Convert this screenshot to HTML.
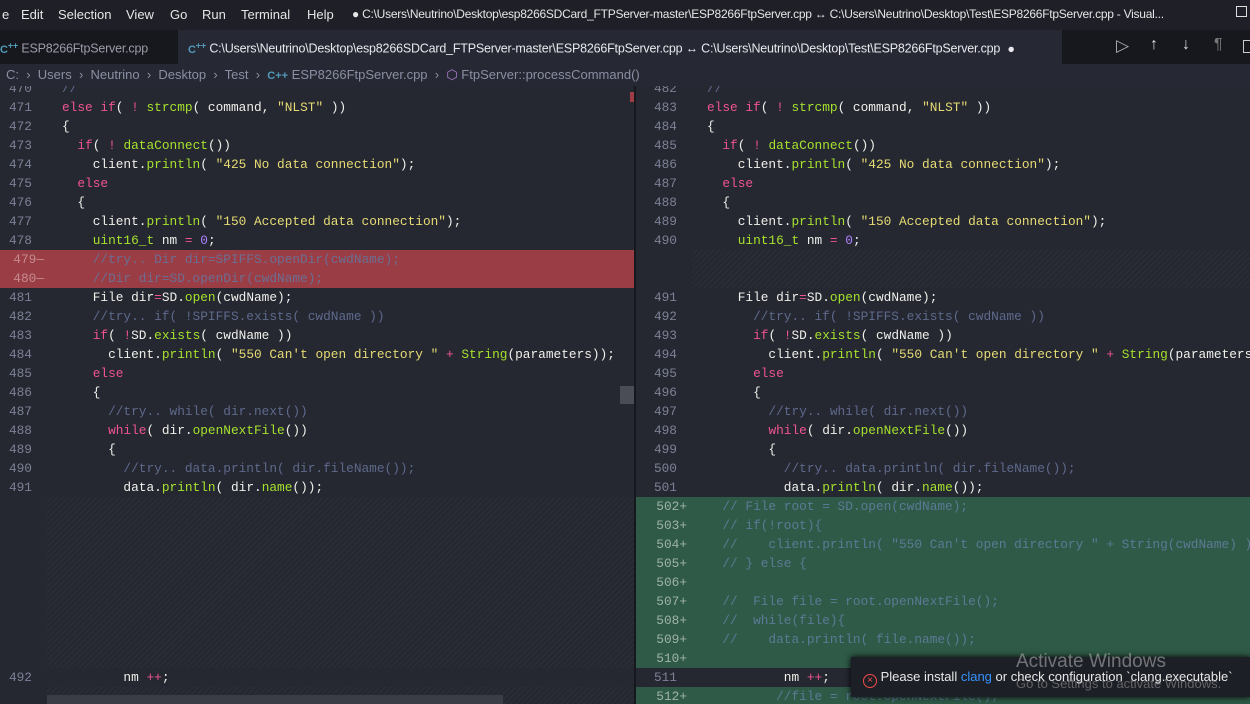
<!DOCTYPE html>
<html><head><meta charset="utf-8"><style>
*{margin:0;padding:0;box-sizing:border-box}
body{width:1250px;height:704px;overflow:hidden;background:#252731;font-family:"Liberation Sans",sans-serif;position:relative}
.top{position:absolute;left:0;top:0;width:1250px;height:30px;background:#1e1f27;color:#e6e6e6;font-size:13px}
.top span{position:absolute;top:7px;white-space:nowrap}
.tabs{position:absolute;top:30px;left:0;width:1250px;height:34px;background:#17181e}
.tab{position:absolute;top:0;height:34px;font-size:12.5px;color:#9a9ca8;padding-top:10px;white-space:nowrap;overflow:hidden;letter-spacing:-0.2px}
.bc{position:absolute;top:64px;left:0;width:1250px;height:22px;background:#262833;color:#8b8fa3;font-size:13px;padding:3px 0 0 6px;white-space:pre}
.ed{position:absolute;top:86px;height:618px;background:#252731;overflow:hidden}
.row{position:absolute;left:0;height:19px;width:100%;font-family:"Liberation Mono",monospace;font-size:12.8px;line-height:19px;white-space:pre;color:#f0f0ea}
.ln{position:absolute;top:0;text-align:right;color:#7d8196}
.code{position:absolute;top:0}
.k{color:#f0548f}.f{color:#a6e22e}.s{color:#e6db74}.c{color:#5e6a8c}.n{color:#ae81ff}
.del{background:#9b3d45}.del .c{color:#6b6f93}.del .ln{color:#c58a90}
.add{background:#2f5a47}.add .c{color:#5c7a96}.add .ln{color:#9fb3a8}
.hatch{background:repeating-linear-gradient(135deg,#252731 0 3px,#2c2e38 3px 4px)}
</style></head><body>
<div class="top">
<span style="left:2px">e</span><span style="left:21px">Edit</span><span style="left:58px">Selection</span><span style="left:126px">View</span><span style="left:170px">Go</span><span style="left:202px">Run</span><span style="left:241px">Terminal</span><span style="left:307px">Help</span>
<span style="left:352px;font-size:12px;letter-spacing:-0.25px">● C:\Users\Neutrino\Desktop\esp8266SDCard_FTPServer-master\ESP8266FtpServer.cpp ↔ C:\Users\Neutrino\Desktop\Test\ESP8266FtpServer.cpp - Visual...</span>
<span style="left:1236px;top:6px;width:11px;height:11px;border:1px solid #ddd"></span>
</div>
<div class="tabs">
<div class="tab" style="left:0;width:178px;"><span style="color:#519aba;font-size:11px;font-weight:bold">C<sup>++</sup></span> ESP8266FtpServer.cpp</div>
<div class="tab" style="left:178px;width:884px;background:#262833;color:#e8e8ee;padding-left:10px"><span style="color:#519aba;font-size:11px;font-weight:bold">C<sup>++</sup></span> C:\Users\Neutrino\Desktop\esp8266SDCard_FTPServer-master\ESP8266FtpServer.cpp ↔ C:\Users\Neutrino\Desktop\Test\ESP8266FtpServer.cpp <span style="margin-left:4px">●</span></div>
<div style="position:absolute;left:1116px;top:6px;color:#aaa;font-size:17px">▷</div>
<div style="position:absolute;left:1150px;top:6px;color:#ddd;font-size:16px">↑</div>
<div style="position:absolute;left:1182px;top:6px;color:#ddd;font-size:16px">↓</div>
<div style="position:absolute;left:1214px;top:6px;color:#777;font-size:16px">¶</div>
<div style="position:absolute;left:1243px;top:10px;width:8px;height:13px;border:1px solid #ccc"></div>
</div>
<div class="bc">C:  ›  Users  ›  Neutrino  ›  Desktop  ›  Test  ›  <span style="color:#519aba;font-weight:bold;font-size:11px">C++</span> ESP8266FtpServer.cpp  ›  <span style="color:#b180d7">⬡</span> FtpServer::processCommand()</div>

<div class="ed" style="left:0;width:634px">
<div class="row" style="top:-7px"><span class="ln" style="width:32px">470</span><span class="code c" style="left:62px">//</span></div>
<div class="row" style="top:12px"><span class="ln" style="width:32px">471</span><span class="code" style="left:62px"><span class="k">else if</span>( <span class="k">!</span> <span class="f">strcmp</span>( command, <span class="s">"NLST"</span> ))</span></div>
<div class="row" style="top:31px"><span class="ln" style="width:32px">472</span><span class="code" style="left:62px">{</span></div>
<div class="row" style="top:50px"><span class="ln" style="width:32px">473</span><span class="code" style="left:62px">  <span class="k">if</span>( <span class="k">!</span> <span class="f">dataConnect</span>())</span></div>
<div class="row" style="top:69px"><span class="ln" style="width:32px">474</span><span class="code" style="left:62px">    client.<span class="f">println</span>( <span class="s">"425 No data connection"</span>);</span></div>
<div class="row" style="top:88px"><span class="ln" style="width:32px">475</span><span class="code" style="left:62px">  <span class="k">else</span></span></div>
<div class="row" style="top:107px"><span class="ln" style="width:32px">476</span><span class="code" style="left:62px">  {</span></div>
<div class="row" style="top:126px"><span class="ln" style="width:32px">477</span><span class="code" style="left:62px">    client.<span class="f">println</span>( <span class="s">"150 Accepted data connection"</span>);</span></div>
<div class="row" style="top:145px"><span class="ln" style="width:32px">478</span><span class="code" style="left:62px">    <span class="f">uint16_t</span> nm <span class="k">=</span> <span class="n">0</span>;</span></div>
<div class="row del" style="top:164px"><span class="ln" style="width:44px">479—</span><span class="code c" style="left:62px">    //try.. Dir dir=SPIFFS.openDir(cwdName);</span></div>
<div class="row del" style="top:183px"><span class="ln" style="width:44px">480—</span><span class="code c" style="left:62px">    //Dir dir=SD.openDir(cwdName);</span></div>
<div class="row" style="top:202px"><span class="ln" style="width:32px">481</span><span class="code" style="left:62px">    File dir<span class="k">=</span>SD.<span class="f">open</span>(cwdName);</span></div>
<div class="row" style="top:221px"><span class="ln" style="width:32px">482</span><span class="code c" style="left:62px">    //try.. if( !SPIFFS.exists( cwdName ))</span></div>
<div class="row" style="top:240px"><span class="ln" style="width:32px">483</span><span class="code" style="left:62px">    <span class="k">if</span>( <span class="k">!</span>SD.<span class="f">exists</span>( cwdName ))</span></div>
<div class="row" style="top:259px"><span class="ln" style="width:32px">484</span><span class="code" style="left:62px">      client.<span class="f">println</span>( <span class="s">"550 Can't open directory "</span> <span class="k">+</span> <span class="f">String</span>(parameters));</span></div>
<div class="row" style="top:278px"><span class="ln" style="width:32px">485</span><span class="code" style="left:62px">    <span class="k">else</span></span></div>
<div class="row" style="top:297px"><span class="ln" style="width:32px">486</span><span class="code" style="left:62px">    {</span></div>
<div class="row" style="top:316px"><span class="ln" style="width:32px">487</span><span class="code c" style="left:62px">      //try.. while( dir.next())</span></div>
<div class="row" style="top:335px"><span class="ln" style="width:32px">488</span><span class="code" style="left:62px">      <span class="k">while</span>( dir.<span class="f">openNextFile</span>())</span></div>
<div class="row" style="top:354px"><span class="ln" style="width:32px">489</span><span class="code" style="left:62px">      {</span></div>
<div class="row" style="top:373px"><span class="ln" style="width:32px">490</span><span class="code c" style="left:62px">        //try.. data.println( dir.fileName());</span></div>
<div class="row" style="top:392px"><span class="ln" style="width:32px">491</span><span class="code" style="left:62px">        data.<span class="f">println</span>( dir.<span class="f">name</span>());</span></div>
<div class="hatch" style="position:absolute;left:47px;top:411px;width:587px;height:171px"></div>
<div class="row" style="top:582px"><span class="ln" style="width:32px">492</span><span class="code" style="left:62px">        nm <span class="k">++</span>;</span></div>
<div class="hatch" style="position:absolute;left:47px;top:601px;width:587px;height:17px"></div>
<div style="position:absolute;left:47px;top:609px;width:456px;height:9px;background:#3a3c46"></div>
<div style="position:absolute;left:620px;top:300px;width:14px;height:18px;background:#4a4c56"></div>
<div style="position:absolute;left:630px;top:6px;width:4px;height:10px;background:#a03c44"></div>
</div>
<div style="position:absolute;left:634px;top:86px;width:2px;height:618px;background:#17181e"></div>
<div class="ed" style="left:636px;width:614px">
<div class="row" style="top:-7px"><span class="ln" style="width:41px">482</span><span class="code c" style="left:71px">//</span></div>
<div class="row" style="top:12px"><span class="ln" style="width:41px">483</span><span class="code" style="left:71px"><span class="k">else if</span>( <span class="k">!</span> <span class="f">strcmp</span>( command, <span class="s">"NLST"</span> ))</span></div>
<div class="row" style="top:31px"><span class="ln" style="width:41px">484</span><span class="code" style="left:71px">{</span></div>
<div class="row" style="top:50px"><span class="ln" style="width:41px">485</span><span class="code" style="left:71px">  <span class="k">if</span>( <span class="k">!</span> <span class="f">dataConnect</span>())</span></div>
<div class="row" style="top:69px"><span class="ln" style="width:41px">486</span><span class="code" style="left:71px">    client.<span class="f">println</span>( <span class="s">"425 No data connection"</span>);</span></div>
<div class="row" style="top:88px"><span class="ln" style="width:41px">487</span><span class="code" style="left:71px">  <span class="k">else</span></span></div>
<div class="row" style="top:107px"><span class="ln" style="width:41px">488</span><span class="code" style="left:71px">  {</span></div>
<div class="row" style="top:126px"><span class="ln" style="width:41px">489</span><span class="code" style="left:71px">    client.<span class="f">println</span>( <span class="s">"150 Accepted data connection"</span>);</span></div>
<div class="row" style="top:145px"><span class="ln" style="width:41px">490</span><span class="code" style="left:71px">    <span class="f">uint16_t</span> nm <span class="k">=</span> <span class="n">0</span>;</span></div>
<div class="hatch" style="position:absolute;left:56px;top:164px;width:558px;height:38px"></div>
<div class="row" style="top:202px"><span class="ln" style="width:41px">491</span><span class="code" style="left:71px">    File dir<span class="k">=</span>SD.<span class="f">open</span>(cwdName);</span></div>
<div class="row" style="top:221px"><span class="ln" style="width:41px">492</span><span class="code c" style="left:71px">      //try.. if( !SPIFFS.exists( cwdName ))</span></div>
<div class="row" style="top:240px"><span class="ln" style="width:41px">493</span><span class="code" style="left:71px">      <span class="k">if</span>( <span class="k">!</span>SD.<span class="f">exists</span>( cwdName ))</span></div>
<div class="row" style="top:259px"><span class="ln" style="width:41px">494</span><span class="code" style="left:71px">        client.<span class="f">println</span>( <span class="s">"550 Can't open directory "</span> <span class="k">+</span> <span class="f">String</span>(parameters));</span></div>
<div class="row" style="top:278px"><span class="ln" style="width:41px">495</span><span class="code" style="left:71px">      <span class="k">else</span></span></div>
<div class="row" style="top:297px"><span class="ln" style="width:41px">496</span><span class="code" style="left:71px">      {</span></div>
<div class="row" style="top:316px"><span class="ln" style="width:41px">497</span><span class="code c" style="left:71px">        //try.. while( dir.next())</span></div>
<div class="row" style="top:335px"><span class="ln" style="width:41px">498</span><span class="code" style="left:71px">        <span class="k">while</span>( dir.<span class="f">openNextFile</span>())</span></div>
<div class="row" style="top:354px"><span class="ln" style="width:41px">499</span><span class="code" style="left:71px">        {</span></div>
<div class="row" style="top:373px"><span class="ln" style="width:41px">500</span><span class="code c" style="left:71px">          //try.. data.println( dir.fileName());</span></div>
<div class="row" style="top:392px"><span class="ln" style="width:41px">501</span><span class="code" style="left:71px">          data.<span class="f">println</span>( dir.<span class="f">name</span>());</span></div>
<div class="row add" style="top:411px"><span class="ln" style="width:51px">502+</span><span class="code c" style="left:71px">  // File root = SD.open(cwdName);</span></div>
<div class="row add" style="top:430px"><span class="ln" style="width:51px">503+</span><span class="code c" style="left:71px">  // if(!root){</span></div>
<div class="row add" style="top:449px"><span class="ln" style="width:51px">504+</span><span class="code c" style="left:71px">  //    client.println( "550 Can't open directory " + String(cwdName) );</span></div>
<div class="row add" style="top:468px"><span class="ln" style="width:51px">505+</span><span class="code c" style="left:71px">  // } else {</span></div>
<div class="row add" style="top:487px"><span class="ln" style="width:51px">506+</span></div>
<div class="row add" style="top:506px"><span class="ln" style="width:51px">507+</span><span class="code c" style="left:71px">  //  File file = root.openNextFile();</span></div>
<div class="row add" style="top:525px"><span class="ln" style="width:51px">508+</span><span class="code c" style="left:71px">  //  while(file){</span></div>
<div class="row add" style="top:544px"><span class="ln" style="width:51px">509+</span><span class="code c" style="left:71px">  //    data.println( file.name());</span></div>
<div class="row add" style="top:563px"><span class="ln" style="width:51px">510+</span></div>
<div class="row" style="top:582px"><span class="ln" style="width:41px">511</span><span class="code" style="left:71px">          nm <span class="k">++</span>;</span></div>
<div class="row add" style="top:601px"><span class="ln" style="width:51px">512+</span><span class="code c" style="left:71px">         //file = root.openNextFile();</span></div>
</div>
<div style="position:absolute;left:851px;top:657px;width:399px;height:40px;background:#1d1f26;box-shadow:0 0 6px #000;font-size:13px;color:#e8e8e8;padding:12px 0 0 12px;white-space:nowrap">
<span style="display:inline-block;width:14px;height:14px;border:1.5px solid #f14c4c;border-radius:50%;color:#f14c4c;font-size:10px;line-height:11px;text-align:center;vertical-align:-2px">×</span> Please install <span style="color:#3794ff">clang</span> or check configuration `clang.executable`</div>
<div style="position:absolute;left:1016px;top:651px;color:rgba(200,200,200,0.5);font-size:19px">Activate Windows</div>
<div style="position:absolute;left:1016px;top:676px;color:rgba(200,200,200,0.4);font-size:13px;white-space:nowrap">Go to Settings to activate Windows.</div>
</body></html>
